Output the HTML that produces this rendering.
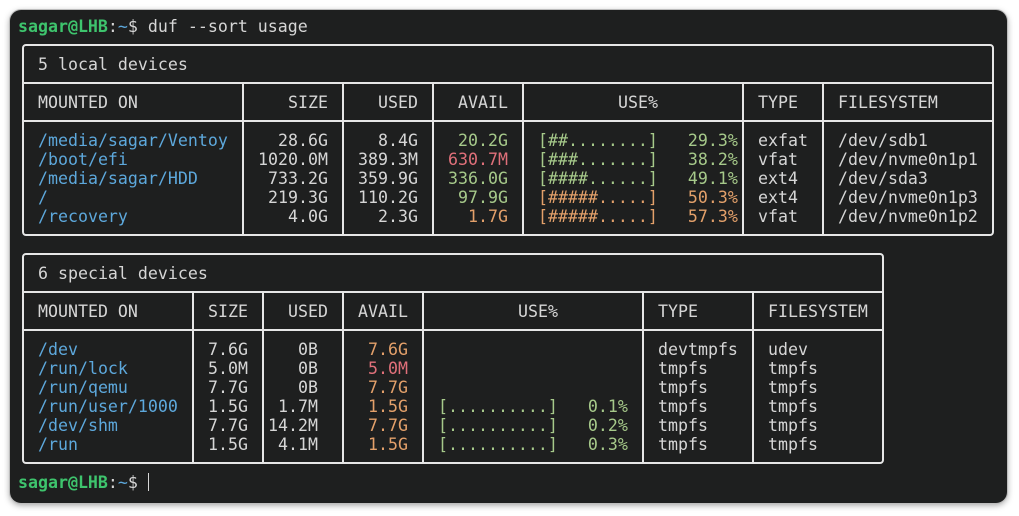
<!DOCTYPE html>
<html><head><meta charset="utf-8"><style>
html,body{margin:0;padding:0;background:#fff;width:1019px;height:516px;overflow:hidden}
.win{position:absolute;left:10px;top:10px;width:997px;height:493px;background:#1e1f1f;border-radius:11px;box-shadow:0 0 0 1px #bdbdbd,0 2px 7px rgba(0,0,0,.4)}
.t{position:absolute;white-space:pre;font-family:"DejaVu Sans Mono","Liberation Mono",monospace;font-size:16.6px;line-height:19px;height:19px;color:#d6d6d6}
.b{position:absolute;border:2px solid #e6e6e6;border-radius:4px;box-sizing:border-box}
.h{position:absolute;height:2px;background:#e6e6e6}
.v{position:absolute;width:2px;background:#e6e6e6}
.g{color:#3ec46d;font-weight:bold}.bl{color:#5da8dc}.gr{color:#a6c98a}.rd{color:#e0707a}.or{color:#e3a06a}
</style></head><body>
<div class="win"></div>
<div class="t" style="left:18px;top:16.5px"><span class="g">sagar@LHB</span>:<span class="bl">~</span>$ duf --sort usage</div>

<div class="b" style="left:22px;top:44px;width:972px;height:192px"></div>
<div class="h" style="left:22px;top:82px;width:972px"></div>
<div class="h" style="left:22px;top:120px;width:972px"></div>
<div class="v" style="left:242px;top:82px;height:153px"></div>
<div class="v" style="left:342px;top:82px;height:153px"></div>
<div class="v" style="left:432px;top:82px;height:153px"></div>
<div class="v" style="left:522px;top:82px;height:153px"></div>
<div class="v" style="left:742px;top:82px;height:153px"></div>
<div class="v" style="left:822px;top:82px;height:153px"></div>
<div class="t" style="left:38px;top:54.5px">5 local devices</div>
<div class="t" style="left:38px;top:92.5px">MOUNTED ON</div>
<div class="t" style="left:288px;top:92.5px">SIZE</div>
<div class="t" style="left:378px;top:92.5px">USED</div>
<div class="t" style="left:458px;top:92.5px">AVAIL</div>
<div class="t" style="left:618px;top:92.5px">USE%</div>
<div class="t" style="left:758px;top:92.5px">TYPE</div>
<div class="t" style="left:838px;top:92.5px">FILESYSTEM</div>

<div class="t bl" style="left:38px;top:130.5px">/media/sagar/Ventoy
/boot/efi
/media/sagar/HDD
/
/recovery</div>
<div class="t" style="left:278px;top:130.5px">28.6G</div>
<div class="t" style="left:258px;top:149.5px">1020.0M</div>
<div class="t" style="left:268px;top:168.5px">733.2G</div>
<div class="t" style="left:268px;top:187.5px">219.3G</div>
<div class="t" style="left:288px;top:206.5px">4.0G</div>
<div class="t" style="left:378px;top:130.5px">8.4G</div>
<div class="t" style="left:358px;top:149.5px">389.3M</div>
<div class="t" style="left:358px;top:168.5px">359.9G</div>
<div class="t" style="left:358px;top:187.5px">110.2G</div>
<div class="t" style="left:378px;top:206.5px">2.3G</div>
<div class="t gr" style="left:458px;top:130.5px">20.2G</div>
<div class="t rd" style="left:448px;top:149.5px">630.7M</div>
<div class="t gr" style="left:448px;top:168.5px">336.0G</div>
<div class="t gr" style="left:458px;top:187.5px">97.9G</div>
<div class="t or" style="left:468px;top:206.5px">1.7G</div>
<div class="t gr" style="left:538px;top:130.5px">[##........]   29.3%</div>
<div class="t gr" style="left:538px;top:149.5px">[###.......]   38.2%</div>
<div class="t gr" style="left:538px;top:168.5px">[####......]   49.1%</div>
<div class="t or" style="left:538px;top:187.5px">[#####.....]   50.3%</div>
<div class="t or" style="left:538px;top:206.5px">[#####.....]   57.3%</div>
<div class="t" style="left:758px;top:130.5px">exfat
vfat
ext4
ext4
vfat</div>
<div class="t" style="left:838px;top:130.5px">/dev/sdb1
/dev/nvme0n1p1
/dev/sda3
/dev/nvme0n1p3
/dev/nvme0n1p2</div>

<div class="b" style="left:22px;top:253px;width:862px;height:211px"></div>
<div class="h" style="left:22px;top:291px;width:862px"></div>
<div class="h" style="left:22px;top:329px;width:862px"></div>
<div class="v" style="left:192px;top:291px;height:172px"></div>
<div class="v" style="left:262px;top:291px;height:172px"></div>
<div class="v" style="left:342px;top:291px;height:172px"></div>
<div class="v" style="left:422px;top:291px;height:172px"></div>
<div class="v" style="left:642px;top:291px;height:172px"></div>
<div class="v" style="left:752px;top:291px;height:172px"></div>
<div class="t" style="left:38px;top:263.5px">6 special devices</div>
<div class="t" style="left:38px;top:301.5px">MOUNTED ON</div>
<div class="t" style="left:208px;top:301.5px">SIZE</div>
<div class="t" style="left:288px;top:301.5px">USED</div>
<div class="t" style="left:358px;top:301.5px">AVAIL</div>
<div class="t" style="left:518px;top:301.5px">USE%</div>
<div class="t" style="left:658px;top:301.5px">TYPE</div>
<div class="t" style="left:768px;top:301.5px">FILESYSTEM</div>

<div class="t bl" style="left:38px;top:339.5px">/dev
/run/lock
/run/qemu
/run/user/1000
/dev/shm
/run</div>
<div class="t" style="left:208px;top:339.5px">7.6G
5.0M
7.7G
1.5G
7.7G
1.5G</div>
<div class="t" style="left:298px;top:339.5px">0B</div>
<div class="t" style="left:298px;top:358.5px">0B</div>
<div class="t" style="left:298px;top:377.5px">0B</div>
<div class="t" style="left:278px;top:396.5px">1.7M</div>
<div class="t" style="left:268px;top:415.5px">14.2M</div>
<div class="t" style="left:278px;top:434.5px">4.1M</div>
<div class="t or" style="left:368px;top:339.5px">7.6G</div>
<div class="t rd" style="left:368px;top:358.5px">5.0M</div>
<div class="t or" style="left:368px;top:377.5px">7.7G
1.5G
7.7G
1.5G</div>
<div class="t gr" style="left:438px;top:396.5px">[..........]   0.1%
[..........]   0.2%
[..........]   0.3%</div>
<div class="t" style="left:658px;top:339.5px">devtmpfs
tmpfs
tmpfs
tmpfs
tmpfs
tmpfs</div>
<div class="t" style="left:768px;top:339.5px">udev
tmpfs
tmpfs
tmpfs
tmpfs
tmpfs</div>

<div class="t" style="left:18px;top:472.5px"><span class="g">sagar@LHB</span>:<span class="bl">~</span>$ </div>
<div style="position:absolute;left:148px;top:473px;width:1px;height:18px;background:#d6d6d6"></div>
</body></html>
